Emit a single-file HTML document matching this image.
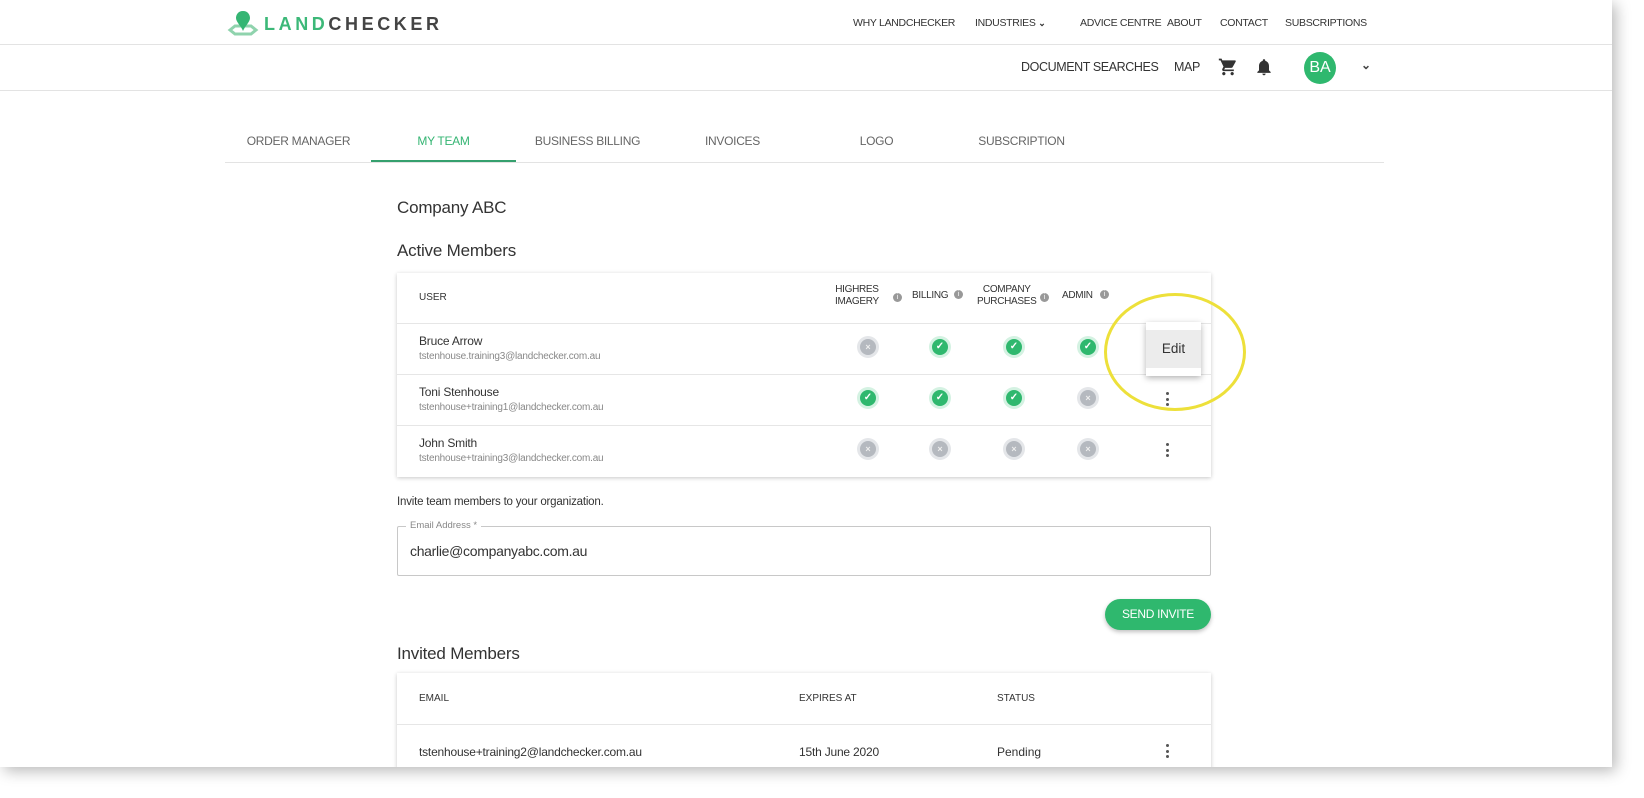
<!DOCTYPE html>
<html><head><meta charset="utf-8"><style>
*{box-sizing:border-box;margin:0;padding:0}
body{width:1644px;height:798px;background:#fff;font-family:"Liberation Sans",sans-serif;color:#333;position:relative;overflow:hidden}
.page{position:absolute;left:0;top:0;width:1612px;height:767px;background:#fff;box-shadow:4px 4px 14px rgba(0,0,0,.28);overflow:hidden}
.abs{position:absolute;white-space:nowrap}
.nav{font-size:10.5px;color:#333;top:17px;letter-spacing:-0.3px}
.hr{position:absolute;left:0;width:1612px;height:1px;background:#e3e3e3}
.tab{position:absolute;top:134px;width:145px;text-align:center;font-size:12px;color:#666;letter-spacing:-0.3px}
.card{position:absolute;left:397px;width:814px;background:#fff;box-shadow:0 1px 4px rgba(0,0,0,.22)}
.row{position:absolute;left:0;width:814px;border-top:1px solid #e6e6e6}
.name{position:absolute;left:22px;font-size:12px;color:#333;letter-spacing:-0.2px}
.mail{position:absolute;left:22px;font-size:10px;color:#888;letter-spacing:-0.2px}
.ic{position:absolute;width:16px;height:16px;border-radius:50%;font-size:10px;line-height:16px;text-align:center;color:#fff;font-weight:bold}
.ok{background:#2fb86e;box-shadow:0 0 0 3px #d4f2e2}
.no{background:#b5b9bf;box-shadow:0 0 0 3px #e4e6e9;color:#eee;font-size:9px}
.keb{position:absolute;width:4px}
.keb i{display:block;width:3px;height:3px;border-radius:50%;background:#555;margin-bottom:2.5px}
.hd{position:absolute;font-size:10px;color:#333;text-align:center;line-height:12px;letter-spacing:-0.3px}
.inf{display:inline-block;width:9px;height:9px;border-radius:50%;background:#999;color:#fff;font-size:7px;line-height:9px;text-align:center;vertical-align:middle;margin-left:3px}
</style></head><body>
<div class="page">
<svg class="abs" style="left:226px;top:9px" width="34" height="28" viewBox="0 0 34 28">
<path d="M4 21 L9 17 H25 L30 21 L25 25 H9 Z" fill="none" stroke="#8fd3ad" stroke-width="3"/>
<path d="M17 2 C12 2 10 6 10 9 C10 13 15 17 17 22 C19 17 24 13 24 9 C24 6 22 2 17 2Z" fill="#35b573"/>
</svg>
<div class="abs" style="left:264px;top:14px;font-size:18px;letter-spacing:3.6px;font-weight:bold"><span style="color:#3cb878">LAND</span><span style="color:#444">CHECKER</span></div>
<div class="abs nav" style="left:853px">WHY LANDCHECKER</div>
<div class="abs nav" style="left:975px">INDUSTRIES <span style="font-size:9px;font-weight:bold">&#8964;</span></div>
<div class="abs nav" style="left:1080px">ADVICE CENTRE</div>
<div class="abs nav" style="left:1167px">ABOUT</div>
<div class="abs nav" style="left:1220px">CONTACT</div>
<div class="abs nav" style="left:1285px">SUBSCRIPTIONS</div>
<div class="hr" style="top:44px"></div>
<div class="abs" style="left:1021px;top:60px;font-size:12.5px;letter-spacing:-0.4px">DOCUMENT SEARCHES</div>
<div class="abs" style="left:1174px;top:60px;font-size:12.5px;letter-spacing:-0.4px">MAP</div>
<svg class="abs" style="left:1218px;top:57px" width="20" height="20" viewBox="0 0 24 24"><path fill="#333" d="M7 18c-1.1 0-2 .9-2 2s.9 2 2 2 2-.9 2-2-.9-2-2-2zM1 2v2h2l3.6 7.6-1.35 2.45C4.5 15.4 5.5 17 7 17h12v-2H7.4l1.1-2h7.45c.75 0 1.4-.4 1.7-1l3.6-6.5C21.6 4.8 21.1 4 20.4 4H5.2l-.9-2H1zm16 16c-1.1 0-2 .9-2 2s.9 2 2 2 2-.9 2-2-.9-2-2-2z"/></svg>
<svg class="abs" style="left:1254px;top:57px" width="20" height="20" viewBox="0 0 24 24"><path fill="#333" d="M12 22c1.1 0 2-.9 2-2h-4c0 1.1.9 2 2 2zm6-6v-5c0-3.1-1.6-5.6-4.5-6.3V4c0-.8-.7-1.5-1.5-1.5s-1.5.7-1.5 1.5v.7C7.6 5.4 6 7.9 6 11v5l-2 2v1h16v-1l-2-2z"/></svg>
<div class="abs" style="left:1304px;top:52px;width:32px;height:32px;border-radius:50%;background:#2fb86e;color:#fff;font-size:16px;text-align:center;line-height:32px">BA</div>
<div class="abs" style="left:1361px;top:58px;font-size:12px;font-weight:bold;color:#444">&#8964;</div>
<div class="hr" style="top:90px"></div>
<div class="tab" style="left:226px">ORDER MANAGER</div>
<div class="tab" style="left:371px;color:#35b573">MY TEAM</div>
<div class="tab" style="left:515px">BUSINESS BILLING</div>
<div class="tab" style="left:660px">INVOICES</div>
<div class="tab" style="left:804px">LOGO</div>
<div class="tab" style="left:949px">SUBSCRIPTION</div>
<div class="abs" style="left:225px;top:162px;width:1159px;height:1px;background:#e3e3e3"></div>
<div class="abs" style="left:371px;top:160px;width:145px;height:2px;background:#35a06e"></div>

<div class="abs" style="left:397px;top:198px;font-size:17px;color:#333;letter-spacing:-0.2px">Company ABC</div>
<div class="abs" style="left:397px;top:241px;font-size:17px;color:#333;letter-spacing:-0.2px">Active Members</div>

<div class="card" style="top:273px;height:204px">
<div class="abs" style="left:22px;top:19px;font-size:10px">USER</div>
<div class="hd" style="left:438px;top:11px">HIGHRES<br>IMAGERY</div><span class="abs inf" style="left:493px;top:20px">i</span>
<div class="hd" style="left:515px;top:17px">BILLING</div><span class="abs inf" style="left:554px;top:17px">i</span>
<div class="hd" style="left:580px;top:11px">COMPANY<br>PURCHASES</div><span class="abs inf" style="left:640px;top:20px">i</span>
<div class="hd" style="left:665px;top:17px">ADMIN</div><span class="abs inf" style="left:700px;top:17px">i</span>

<div class="row" style="top:50px;height:51px">
<div class="name" style="top:10px">Bruce Arrow</div><div class="mail" style="top:27px">tstenhouse.training3@landchecker.com.au</div>
<div class="ic no" style="left:463px;top:15px">×</div><div class="ic ok" style="left:535px;top:15px">✓</div><div class="ic ok" style="left:609px;top:15px">✓</div><div class="ic ok" style="left:683px;top:15px">✓</div>
</div>
<div class="row" style="top:101px;height:51px">
<div class="name" style="top:10px">Toni Stenhouse</div><div class="mail" style="top:27px">tstenhouse+training1@landchecker.com.au</div>
<div class="ic ok" style="left:463px;top:15px">✓</div><div class="ic ok" style="left:535px;top:15px">✓</div><div class="ic ok" style="left:609px;top:15px">✓</div><div class="ic no" style="left:683px;top:15px">×</div>
<div class="keb" style="left:769px;top:17px"><i></i><i></i><i></i></div>
</div>
<div class="row" style="top:152px;height:52px">
<div class="name" style="top:10px">John Smith</div><div class="mail" style="top:27px">tstenhouse+training3@landchecker.com.au</div>
<div class="ic no" style="left:463px;top:15px">×</div><div class="ic no" style="left:535px;top:15px">×</div><div class="ic no" style="left:609px;top:15px">×</div><div class="ic no" style="left:683px;top:15px">×</div>
<div class="keb" style="left:769px;top:17px"><i></i><i></i><i></i></div>
</div>
</div>
<div class="abs" style="left:1146px;top:322px;width:55px;height:54px;background:#fff;box-shadow:0 2px 6px rgba(0,0,0,.3)"><div style="position:absolute;left:0;top:8px;width:55px;height:38px;background:#ececec;text-align:center;line-height:38px;font-size:13.5px;color:#333">Edit</div></div>
<div class="abs" style="left:1104px;top:293px;width:142px;height:118px;border:3px solid #ede03a;border-radius:50%"></div>

<div class="abs" style="left:397px;top:496px;font-size:11.5px;letter-spacing:-0.2px">Invite team members to your organization.</div>
<div class="abs" style="left:397px;top:526px;width:814px;height:50px;border:1px solid #c8c8c8;border-radius:2px"></div>
<div class="abs" style="left:406px;top:520px;padding:0 4px;background:#fff;font-size:9.5px;color:#888">Email Address *</div>
<div class="abs" style="left:410px;top:543px;font-size:14px;color:#333;letter-spacing:-0.3px">charlie@companyabc.com.au</div>
<div class="abs" style="left:1105px;top:599px;width:106px;height:31px;border-radius:16px;background:#2fb86e;color:#fff;font-size:12px;text-align:center;line-height:31px;box-shadow:0 2px 4px rgba(0,0,0,.25);letter-spacing:-0.3px">SEND INVITE</div>

<div class="abs" style="left:397px;top:644px;font-size:17px;color:#333;letter-spacing:-0.2px">Invited Members</div>
<div class="card" style="top:673px;height:110px">
<div class="abs" style="left:22px;top:20px;font-size:10px">EMAIL</div>
<div class="abs" style="left:402px;top:20px;font-size:10px">EXPIRES AT</div>
<div class="abs" style="left:600px;top:20px;font-size:10px">STATUS</div>
<div class="row" style="top:51px;height:60px">
<div class="name" style="top:20px">tstenhouse+training2@landchecker.com.au</div>
<div class="abs" style="left:402px;top:20px;font-size:12px;letter-spacing:-0.2px">15th June 2020</div>
<div class="abs" style="left:600px;top:20px;font-size:12px">Pending</div>
<div class="keb" style="left:769px;top:19px"><i></i><i></i><i></i></div>
</div>
</div>
</div>
</body></html>
